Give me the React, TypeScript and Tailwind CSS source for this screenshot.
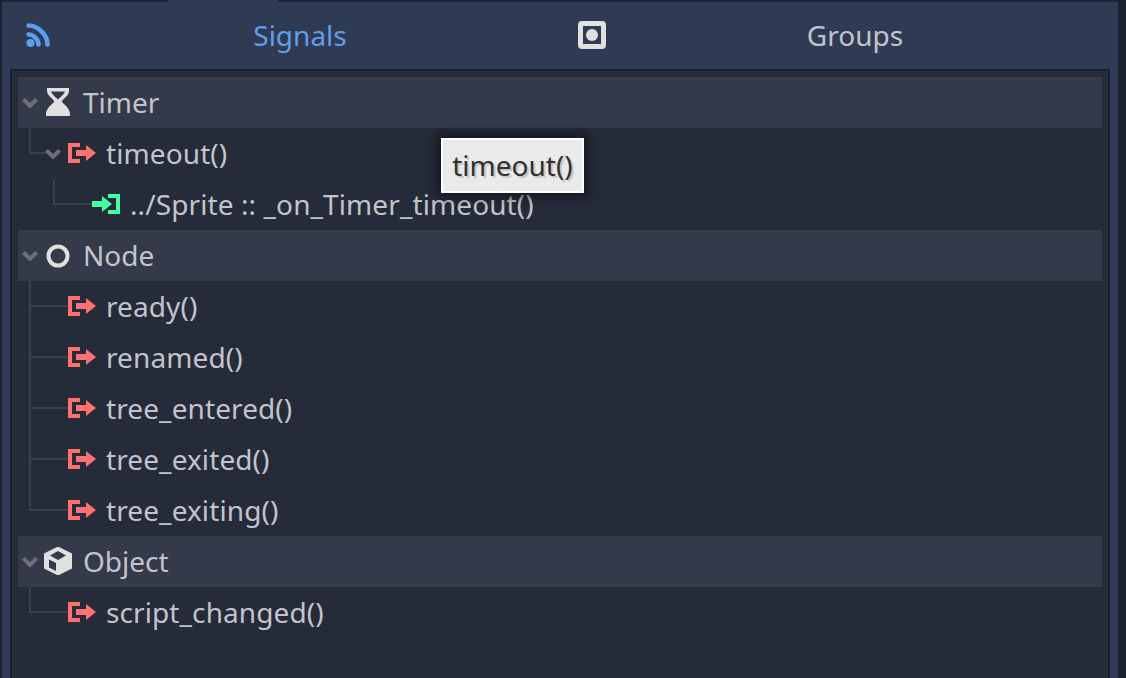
const FONT = "font-['Noto_Sans','Open_Sans',sans-serif]";

function Chevron() {
  return (
    <svg width="16" height="10" viewBox="0 0 16 10" className="shrink-0 mt-px">
      <path d="M1.400 1.400 8 7.800l6.600-6.400" fill="none" stroke="#6d7079" strokeWidth="4" />
    </svg>
  );
}

function SignalIcon() {
  return (
    <svg width="28" height="20" viewBox="0 0 28 20" className="shrink-0 mb-px">
      <path d="M12 0H0v20h12v-4H4V4h8z" fill="#ff7070" />
      <path d="M8 7h10V2l10 8-10 8v-5H8z" fill="#ff7070" />
    </svg>
  );
}

function SlotIcon() {
  return (
    <svg width="28" height="20" viewBox="0 0 28 20" className="shrink-0 mb-px">
      <path d="M16 0h12v20H16v-4h8V4h-8z" fill="#45ffa2" />
      <path d="M0 7h10V2l10 8-10 8v-5H0z" fill="#45ffa2" />
    </svg>
  );
}

function Hourglass() {
  return (
    <svg width="24" height="28" viewBox="0 0 24 28" className="mb-px">
      <path
        d="M1 0h22v3c0 4-5 7-7 10v1c3 3 8 7 8 12v2H0v-2c0-5 5-9 8-12v-1C6 10 1 7 1 3z"
        fill="#e0e0e0"
      />
      <path d="M5 3.500h14c-1 3-5 6-7 8-2-2-6-5-7-8z" fill="#343a49" />
    </svg>
  );
}

function NodeCircle() {
  return (
    <svg width="24" height="24" viewBox="0 0 24 24" className="mt-px">
      <circle cx="12" cy="12" r="9.500" fill="none" stroke="#e0e0e0" strokeWidth="4" />
    </svg>
  );
}

function Cube() {
  return (
    <svg width="28" height="28" viewBox="0 0 28 28" className="mb-px">
      <path d="M14 0 28 7v14l-14 7-14-7V7z" fill="#e0e0e0" stroke="#e0e0e0" strokeLinejoin="round" />
      <path d="M14 4 22 8.500 14 13 6 8.500zM5 12.500l7 3.500v8l-7-3.500z" fill="#343a49" />
    </svg>
  );
}

function RssIcon() {
  return (
    <svg width="24" height="24" viewBox="0 0 24 24" className="shrink-0 mb-px">
      <circle cx="4.500" cy="20" r="4" fill="#5a9fed" />
      <path d="M2.500 11.500c5 0 10 5 10 10" fill="none" stroke="#5a9fed" strokeWidth="4.500" strokeLinecap="round" />
      <path d="M2.500 2.500c9.500 0 19 9.500 19 19" fill="none" stroke="#5a9fed" strokeWidth="4.500" strokeLinecap="round" />
    </svg>
  );
}

function SectionRow({ icon, label }: { icon: React.ReactNode; label: string }) {
  return (
    <div className="h-[51px] flex items-center bg-[#343a49] pl-1">
      <Chevron />
      <div className="w-7 ml-[6px] flex justify-center">{icon}</div>
      <span className="ml-[11px] pb-0.5 text-[#c2c4cb]">{label}</span>
    </div>
  );
}

function SignalRow({ label }: { label: string }) {
  return (
    <div className="h-[51px] flex items-center pl-[50px]">
      <SignalIcon />
      <span className="ml-[10px] pb-0.5 tracking-[0.1px] text-[#c2c4cb]">{label}</span>
    </div>
  );
}

export default function App() {
  return (
    <div className={`h-[678px] w-[1126px] overflow-hidden bg-[#1c2230] pt-0.5 pl-0.5 pr-2 relative text-[28px] leading-none ${FONT}`}>
      {/* active tab edge */}
      <div className="absolute left-[168px] top-0 h-0.5 w-[110px] bg-[#2f3b55]"></div>

      <div className="h-full bg-[#2f3b55] pb-0 flex flex-col">
        {/* tabs */}
        <div className="h-[67px] flex items-center shrink-0">
          <div className="w-[552px] flex items-center pl-6">
            <RssIcon />
            <span className="flex-1 text-center pr-1 pb-0.5 text-[#609fe8]">Signals</span>
          </div>
          <div className="flex-1 flex items-center pl-6 pr-3.5">
            <div className="w-7 h-7 mb-px border-[5px] border-[#e0e0e0] rounded-sm flex items-center justify-center shrink-0">
              <div className="w-3 h-3 rounded-full bg-[#e0e0e0]"></div>
            </div>
            <span className="flex-1 text-center pb-0.5 text-[#c2c4cb]">Groups</span>
          </div>
        </div>

        {/* tree */}
        <div className="flex-1 mx-2 border-2 border-b-0 border-[#1b202d] bg-[#252b39] pt-1.5 px-1.5 relative">
          <svg className="absolute left-0 top-0" width="120" height="600">
            <g fill="none" stroke="#3a4050" strokeWidth="2">
              <path d="M18 57V82H34" />
              <path d="M42 108V133H80" />
              <path d="M18 210V439H55" />
              <path d="M18 235H55M18 286H55M18 337H55M18 388H55" />
              <path d="M18 516V541H55" />
            </g>
          </svg>
          <div className="relative">
            <SectionRow icon={<Hourglass />} label="Timer" />
            <div className="h-[51px] flex items-center pl-[27px]">
              <Chevron />
              <span className="ml-[7px] flex"><SignalIcon /></span>
              <span className="ml-[10px] pb-0.5 tracking-[0.1px] text-[#c2c4cb]">timeout()</span>
            </div>
            <div className="h-[51px] flex items-center pl-[74px]">
              <SlotIcon />
              <span className="ml-[10px] pb-0.5 tracking-[0.1px] text-[#c2c4cb]">../Sprite :: _on_Timer_timeout()</span>
            </div>
            <SectionRow icon={<NodeCircle />} label="Node" />
            <SignalRow label="ready()" />
            <SignalRow label="renamed()" />
            <SignalRow label="tree_entered()" />
            <SignalRow label="tree_exited()" />
            <SignalRow label="tree_exiting()" />
            <SectionRow icon={<Cube />} label="Object" />
            <SignalRow label="script_changed()" />
          </div>
        </div>
      </div>

      {/* tooltip */}
      <div className="absolute left-[441px] top-[138px] w-[143px] h-[55px] pb-0.5 border-2 border-white bg-[#e9eaeb] flex items-center justify-center text-[#33302b] [text-shadow:2px_2px_0_#c8c8c8] shadow-[0_0_10px_4px_rgba(10,12,18,0.6)]">
        timeout()
      </div>
    </div>
  );
}
